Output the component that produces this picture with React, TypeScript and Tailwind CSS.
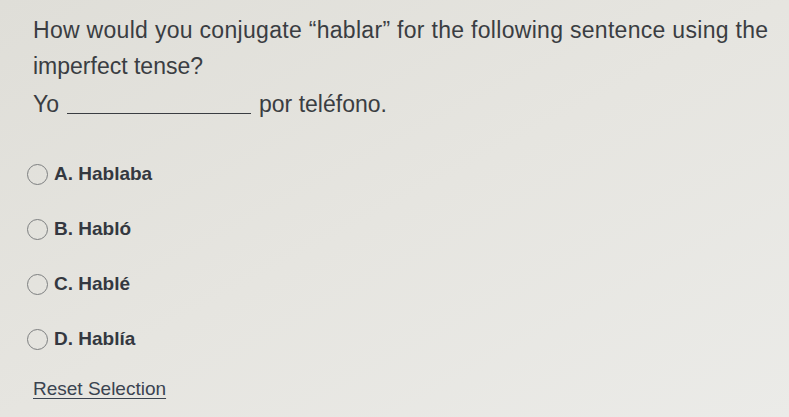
import React from "react";

function Radio() {
  return <span className="inline-block w-[21px] h-[21px] rounded-full border-[1.5px] border-[#7d7f80] shrink-0" />;
}

const options = ["A. Hablaba", "B. Habló", "C. Hablé", "D. Hablía"];

export default function App() {
  return (
    <div
      className="w-[789px] h-[417px] overflow-hidden text-[#3a3d42] bg-gradient-to-br from-[#dfded8] via-[#e6e5e0] to-[#ebebe8]"
      style={{ fontFamily: '"Liberation Sans", Arial, sans-serif' }}
    >
      <div className="pl-[33px] pt-[12px]">
        <p className="text-[23px] leading-[36px] whitespace-nowrap">
          <span className="tracking-[0.3px]">How would you conjugate “hablar” for the following sentence using the</span>
          <br />
          imperfect tense?
        </p>
        <p className="text-[23px] leading-[37px] mt-[2px] flex items-baseline">
          <span>Yo</span>
          <span className="inline-block w-[184px] border-b-[1.5px] border-[#3a3d42] ml-[8px] mr-[8px] translate-y-[2px]" />
          <span>por teléfono.</span>
        </p>
        <div className="mt-[41px] flex flex-col gap-[34px] -ml-[6px]">
          {options.map((o) => (
            <div key={o} className="flex items-center gap-[6px] h-[21px]">
              <Radio />
              <span className="text-[19px] font-bold text-[#343840]">{o}</span>
            </div>
          ))}
        </div>
        <div className="mt-[25px]">
          <span className="text-[19px] underline underline-offset-[3px] text-[#3a4350]">Reset Selection</span>
        </div>
      </div>
    </div>
  );
}
